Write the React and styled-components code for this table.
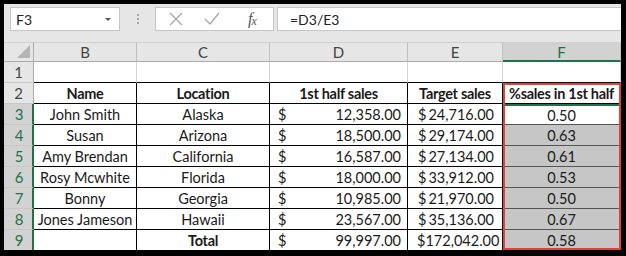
import styled, { createGlobalStyle, css } from "styled-components";

const GlobalStyle = createGlobalStyle`
  html, body {
    margin: 0;
    padding: 0;
    background: #000;
  }
  body {
    font-family: "Lato", "Liberation Sans", sans-serif;
  }
`;

const green = "#217346";
const gridLine = "#d4d4d4";
const ink = "#1a1a1a";

const Frame = styled.div`
  position: relative;
  width: 617px;
  height: 246px;
  margin: 4px 5px 6px 4px;
  background: #fff;
  overflow: hidden;
`;

const Toolbar = styled.div`
  height: 38px;
  box-sizing: border-box;
  padding: 3px 0 0 6px;
  background: #e6e6e6;
  display: flex;
  align-items: flex-start;
`;

const NameBox = styled.div`
  width: 110px;
  height: 24px;
  box-sizing: border-box;
  background: #fff;
  border: 1px solid #c6c6c6;
  display: flex;
  align-items: center;
  justify-content: space-between;
  padding: 0 8px 0 5px;
  font-size: 14px;
  color: #222;
`;

const Caret = styled.span`
  width: 0;
  height: 0;
  border-left: 3px solid transparent;
  border-right: 3px solid transparent;
  border-top: 3px solid #555;
`;

const Grip = styled.div`
  width: 17px;
  margin: 0 9px 0 9px;
  height: 24px;
  display: flex;
  flex-direction: column;
  align-items: center;
  justify-content: center;
  gap: 2px;
  span {
    width: 2px;
    height: 2px;
    background: #a9a9a9;
  }
`;

const FxBox = styled.div`
  width: 119px;
  height: 24px;
  box-sizing: border-box;
  background: #fff;
  border: 1px solid #c6c6c6;
  display: flex;
  align-items: center;
  padding: 0 0 0 13px;
  gap: 21px;
`;

const FxLabel = styled.span`
  font-family: "Liberation Serif", "DejaVu Serif", serif;
  font-style: italic;
  font-size: 16px;
  color: #555;
  margin-left: 7px;
  letter-spacing: -1px;
  sub {
    font-size: 12px;
    vertical-align: -1px;
  }
`;

const FormulaBar = styled.div`
  flex: 1;
  height: 24px;
  margin-left: 3px;
  box-sizing: border-box;
  background: #fff;
  border: 1px solid #c6c6c6;
  border-right: none;
  display: flex;
  align-items: center;
  padding-left: 12px;
  font-size: 14px;
  color: #222;
`;

const Sheet = styled.div`
  display: grid;
  grid-template-columns: 30px 103px 133px 138px 95px 118px;
  grid-auto-rows: 21px;
  grid-template-rows: 20px;
`;

const cellBase = css`
  box-sizing: border-box;
  display: flex;
  align-items: center;
  white-space: nowrap;
  overflow: hidden;
  font-size: 14.5px;
`;

const Corner = styled.div`
  ${cellBase};
  background: #e6e6e6;
  border-right: 1px solid #ababab;
  border-bottom: 1px solid #ababab;
  border-top: 1px solid #d0d0d0;
  justify-content: flex-end;
  align-items: flex-end;
  padding: 0 3px 3px 0;
`;

const Triangle = styled.span`
  width: 0;
  height: 0;
  border-left: 13px solid transparent;
  border-bottom: 13px solid #b4b4b4;
`;

const ColHead = styled.div`
  ${cellBase};
  font-size: 15px;
  justify-content: center;
  background: ${(p) => (p.$active ? "#d2d2d2" : "#e6e6e6")};
  color: ${(p) => (p.$active ? green : "#444")};
  border-top: 1px solid #d0d0d0;
  border-right: 1px solid #c0c0c0;
  border-bottom: ${(p) => (p.$active ? `2px solid ${green}` : "1px solid #ababab")};
  padding-top: ${(p) => (p.$active ? "1px" : "0")};
`;

const RowHead = styled.div`
  ${cellBase};
  font-size: 15px;
  justify-content: center;
  background: ${(p) => (p.$active ? "#d2d2d2" : "#e6e6e6")};
  color: ${(p) => (p.$active ? green : "#444")};
  border-bottom: 1px solid #c8c8c8;
  border-right: ${(p) => (p.$active ? `2px solid ${green}` : "1px solid #ababab")};
  padding-left: ${(p) => (p.$active ? "2px" : "0")};
`;

const Cell = styled.div`
  ${cellBase};
  color: ${ink};
  justify-content: ${(p) => p.$align || "center"};
  font-weight: ${(p) => (p.$bold ? 700 : 400)};
  letter-spacing: ${(p) => (p.$bold ? "-0.3px" : "normal")};
  background: ${(p) => p.$fill || "#fff"};
  border-right: 1px solid ${(p) => (p.$blank ? gridLine : "#000")};
  border-bottom: 1px solid ${(p) => p.$line || "#000"};
  border-top: ${(p) => (p.$topMark ? `2px solid ${green}` : "none")};
`;

const Money = styled(Cell)`
  justify-content: space-between;
  letter-spacing: 0;
  padding: 0 ${(p) => p.$padR}px 0 ${(p) => p.$padL}px;
`;

const Highlight = styled.div`
  position: absolute;
  left: 499px;
  top: 79px;
  width: 118px;
  height: 167px;
  box-sizing: border-box;
  border: 2px solid #e5413b;
  pointer-events: none;
`;

const rows = [
  ["John Smith", "Alaska", "12,358.00", "24,716.00", "0.50"],
  ["Susan", "Arizona", "18,500.00", "29,174.00", "0.63"],
  ["Amy Brendan", "California", "16,587.00", "27,134.00", "0.61"],
  ["Rosy Mcwhite", "Florida", "18,000.00", "33,912.00", "0.53"],
  ["Bonny", "Georgia", "10,985.00", "21,970.00", "0.50"],
  ["Jones Jameson", "Hawaii", "23,567.00", "35,136.00", "0.67"],
];

const XIcon = () => (
  <svg width="14" height="14" viewBox="0 0 14 14">
    <path d="M1 1 L13 13 M13 1 L1 13" stroke="#a6a6a6" strokeWidth="1.3" fill="none" />
  </svg>
);

const CheckIcon = () => (
  <svg width="16" height="14" viewBox="0 0 16 14">
    <path d="M1 7 L6 12 L15 1" stroke="#a6a6a6" strokeWidth="1.3" fill="none" />
  </svg>
);

function DataRow({ n, r, first }) {
  return (
    <>
      <RowHead $active>{n}</RowHead>
      <Cell>{r[0]}</Cell>
      <Cell>{r[1]}</Cell>
      <Money $padL={8} $padR={6}>
        <span>$</span>
        <span>{r[2]}</span>
      </Money>
      <Money $padL={10} $padR={8}>
        <span>$</span>
        <span>{r[3]}</span>
      </Money>
      <Cell $fill={first ? "#fff" : "#c6c6c6"} $topMark={first} $line="#555">
        {r[4]}
      </Cell>
    </>
  );
}

export default function App() {
  return (
    <>
      <GlobalStyle />
      <Frame>
        <Toolbar>
          <NameBox>
            F3
            <Caret />
          </NameBox>
          <Grip>
            <span />
            <span />
            <span />
          </Grip>
          <FxBox>
            <XIcon />
            <CheckIcon />
            <FxLabel>
              f<sub>x</sub>
            </FxLabel>
          </FxBox>
          <FormulaBar>=D3/E3</FormulaBar>
        </Toolbar>

        <Sheet>
          <Corner>
            <Triangle />
          </Corner>
          {["B", "C", "D", "E", "F"].map((c) => (
            <ColHead key={c} $active={c === "F"}>
              {c}
            </ColHead>
          ))}

          <RowHead>1</RowHead>
          {[0, 1, 2, 3, 4].map((i) => (
            <Cell key={i} $blank />
          ))}

          <RowHead>2</RowHead>
          <Cell $bold>Name</Cell>
          <Cell $bold>Location</Cell>
          <Cell $bold>1st half sales</Cell>
          <Cell $bold>Target sales</Cell>
          <Cell $bold>%sales in 1st half</Cell>

          {rows.map((r, i) => (
            <DataRow key={r[0]} n={i + 3} r={r} first={i === 0} />
          ))}

          <RowHead $active>9</RowHead>
          <Cell />
          <Cell $bold>Total</Cell>
          <Money $padL={8} $padR={6}>
            <span>$</span>
            <span>99,997.00</span>
          </Money>
          <Money $padL={9} $padR={7}>
            <span>$172,042.00</span>
          </Money>
          <Cell $fill="#c6c6c6">0.58</Cell>
        </Sheet>

        <Highlight />
      </Frame>
    </>
  );
}
